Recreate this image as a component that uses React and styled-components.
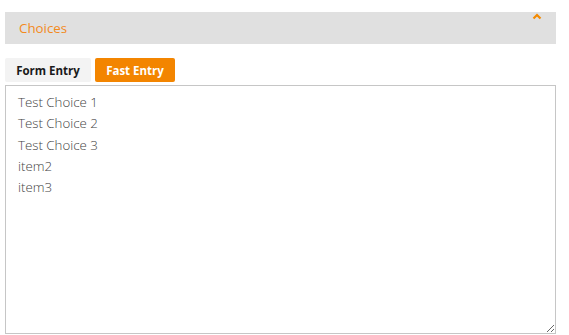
import React from "react";
import styled, { createGlobalStyle } from "styled-components";

const Global = createGlobalStyle`
  html, body { margin: 0; padding: 0; background: #fff; }
  body { font-family: "Open Sans", "Segoe UI", sans-serif; }
`;

const Page = styled.div`
  padding: 12px 13px 0 5px;
  width: 569px;
  box-sizing: border-box;
`;

const Header = styled.div`
  position: relative;
  height: 32px;
  background: #e0e0e0;
  display: flex;
  align-items: center;
  padding-left: 14px;
`;

const Title = styled.span`
  color: #f38a1d;
  font-size: 13.3px;
  font-weight: 400;
`;

const Chevron = styled.svg`
  position: absolute;
  right: 14px;
  top: 1px;
`;

const Tabs = styled.div`
  display: flex;
  gap: 4px;
  margin-top: 14px;
`;

const Tab = styled.button`
  height: 24px;
  border: none;
  border-radius: 2px;
  padding: 0;
  width: ${(p) => p.$w}px;
  background: ${(p) => (p.$active ? "#f38500" : "#f3f3f3")};
  color: ${(p) => (p.$active ? "#fff" : "#1a1a1a")};
  font-family: "Open Sans", sans-serif;
  font-size: 11.5px;
  font-weight: 700;
  cursor: pointer;
`;

const Area = styled.textarea`
  display: block;
  margin-top: 3px;
  width: 551px;
  height: 249px;
  box-sizing: border-box;
  border: 1px solid #c6c6c6;
  padding: 6px 12px;
  font-family: "Open Sans", sans-serif;
  font-size: 13.3px;
  font-weight: 300;
  line-height: 21.3px;
  color: #444;
  resize: both;
  outline: none;
`;

export default function App() {
  return (
    <Page>
      <Global />
      <Header>
        <Title>Choices</Title>
        <Chevron width="10" height="7" viewBox="0 0 10 7">
          <path d="M1.5 5.5 L5 2 L8.5 5.5" fill="none" stroke="#f38a00" strokeWidth="2.2" />
        </Chevron>
      </Header>
      <Tabs>
        <Tab $w={86}>Form Entry</Tab>
        <Tab $w={80} $active>Fast Entry</Tab>
      </Tabs>
      <Area
        defaultValue={"Test Choice 1\nTest Choice 2\nTest Choice 3\nitem2\nitem3"}
      />
    </Page>
  );
}
